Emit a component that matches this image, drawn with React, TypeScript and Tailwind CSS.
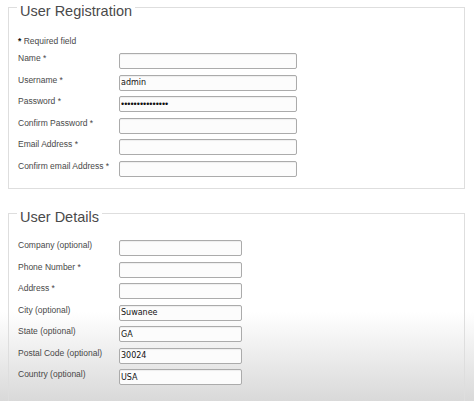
import React from "react";

type Field = { label: string; value?: string; password?: boolean };

const registration: Field[] = [
  { label: "Name *" },
  { label: "Username *", value: "admin" },
  { label: "Password *", value: "•••••••••••••••", password: true },
  { label: "Confirm Password *" },
  { label: "Email Address *" },
  { label: "Confirm email Address *" },
];

const details: Field[] = [
  { label: "Company (optional)" },
  { label: "Phone Number *" },
  { label: "Address *" },
  { label: "City (optional)", value: "Suwanee" },
  { label: "State (optional)", value: "GA" },
  { label: "Postal Code (optional)", value: "30024" },
  { label: "Country (optional)", value: "USA" },
];

function Row({ field, inputWidth }: { field: Field; inputWidth: string }) {
  return (
    <div className="flex items-start">
      <label className="w-[101px] shrink-0 text-[8.5px] leading-[11px] text-[#484848]">
        {field.label}
      </label>
      <input
        readOnly
        defaultValue={field.value ?? ""}
        className={`${inputWidth} h-[16px] rounded-[2px] border border-[#ababab] bg-[#fcfcfc] px-[1px] text-[#111] outline-none shadow-[inset_0_1px_1px_rgba(0,0,0,0.06)] ${
          field.password
            ? "text-[9px] font-['Liberation_Sans',sans-serif]"
            : "text-[8px] font-['DejaVu_Sans',sans-serif]"
        }`}
      />
    </div>
  );
}

function Section({
  title,
  children,
  className = "",
}: {
  title: string;
  children: React.ReactNode;
  className?: string;
}) {
  return (
    <div className={`relative border border-[#dedede] ${className}`}>
      <span className="absolute left-[8px] top-[-5px] bg-white px-[3px] text-[14.5px] leading-[16px] text-[#4a4a4a]">
        {title}
      </span>
      {children}
    </div>
  );
}

export default function App() {
  return (
    <div className="h-[401px] overflow-hidden bg-[linear-gradient(to_bottom,#fff_0px,#fff_312px,#d9d9d9_401px)] pl-[8px] pt-[7px] font-['Liberation_Sans',Arial,sans-serif]">
      <div className="w-[457px]">
        <Section title="User Registration" className="h-[182px] pl-[9px] pt-[28px]">
          <p className="text-[8.5px] leading-[11px] text-[#484848]">
            <span className="font-bold text-[#111]">*</span> Required field
          </p>
          <div className="mt-[6px] flex flex-col gap-[5.5px]">
            {registration.map((f) => (
              <Row key={f.label} field={f} inputWidth="w-[178px]" />
            ))}
          </div>
        </Section>

        <Section title="User Details" className="mt-[24px] h-[220px] border-b-0 pl-[9px] pt-[26px]">
          <div className="flex flex-col gap-[5.5px]">
            {details.map((f) => (
              <Row key={f.label} field={f} inputWidth="w-[123px]" />
            ))}
          </div>
        </Section>
      </div>
    </div>
  );
}
